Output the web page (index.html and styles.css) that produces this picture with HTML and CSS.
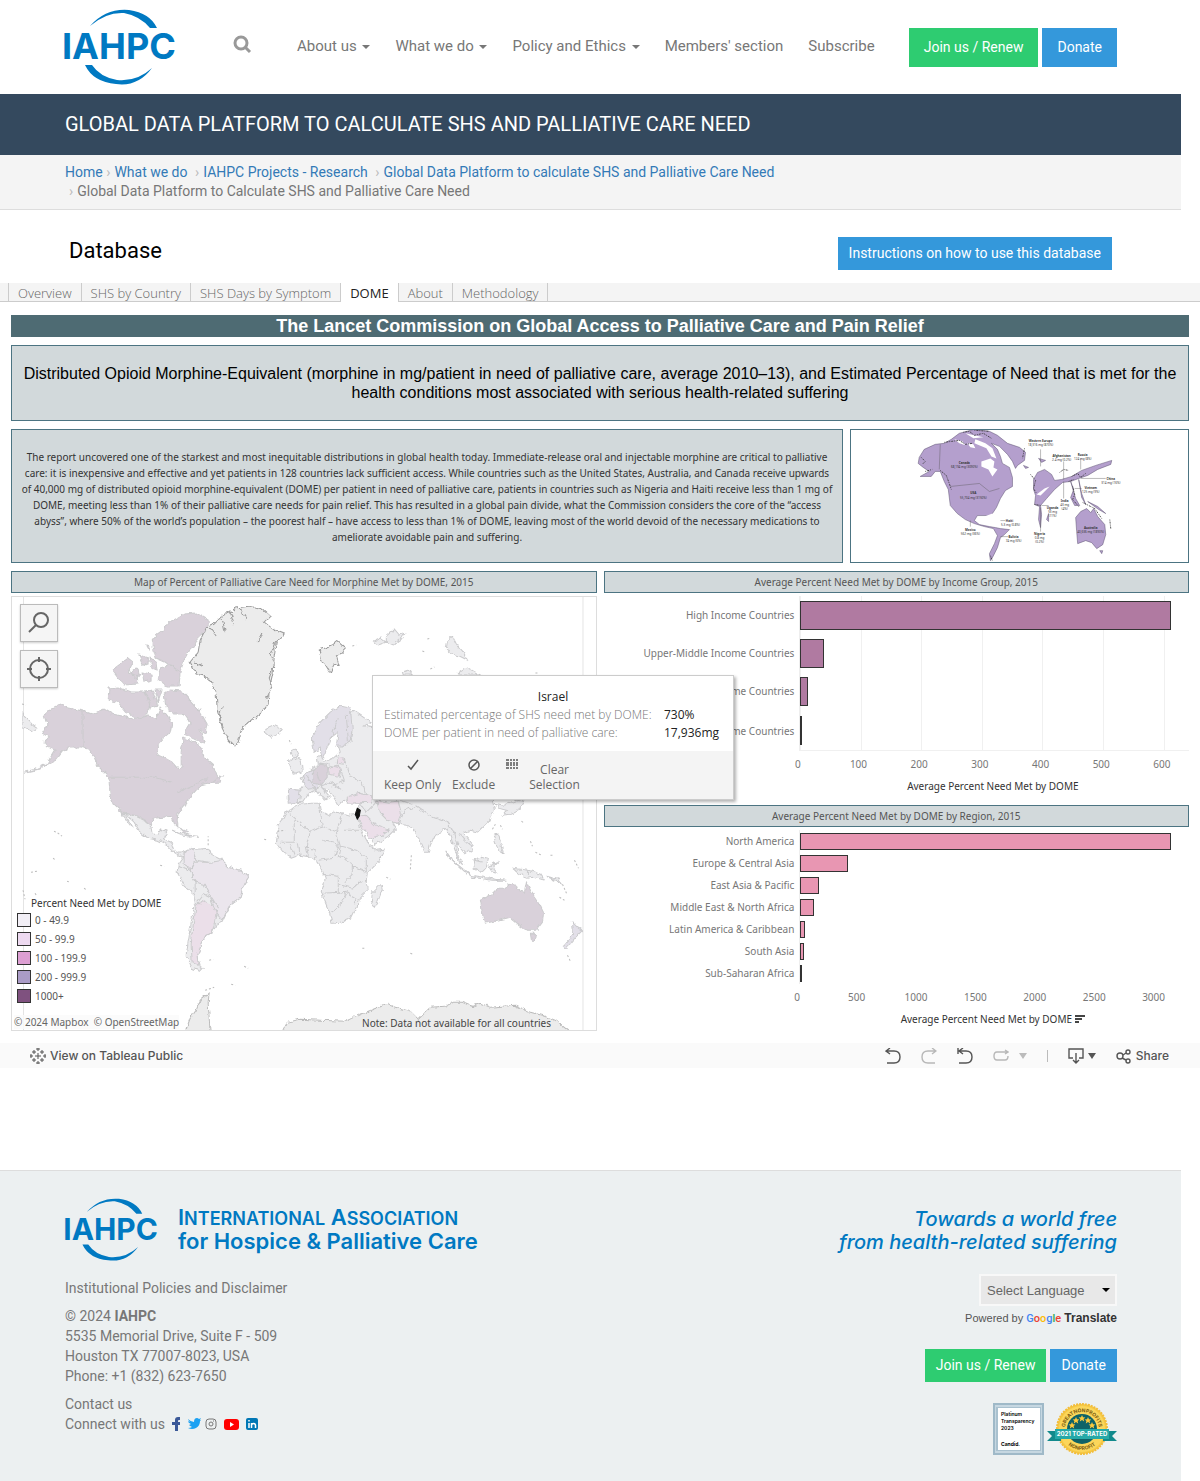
FILE: index.html
```html
<!DOCTYPE html>
<html lang="en">
<head>
    <meta charset="UTF-8">
    <meta name="viewport" content="width=device-width, initial-scale=1.0">
    <title>Global Data Platform - IAHPC</title>
    <link rel="stylesheet" href="styles.css">
</head>
<body>

    <header class="site header">
        <a href="#" class="logo" aria-label="IAHPC home">
            <svg class="logo-img" viewBox="0 0 112 76">
                <path d="M26 17Q42-1 65 1Q86 4 93 19L86 19Q76 7 60 4Q42 3 26 17Z"/>
                <path d="M21 56L28 56Q36 68 53 71Q73 73 88 59Q74 78 52 75Q29 73 21 56Z"/>
                <text x="-2" y="50">IAHPC</text>
            </svg>
        </a>
        <button class="search" aria-label="Search">
            <svg width="20" height="20" viewBox="0 0 20 20"><circle cx="8" cy="8" r="6"/><path d="M12 12L17 17"/></svg>
        </button>
        <nav class="nav">
            <a href="#">About us <i class="caret"></i></a>
            <a href="#">What we do <i class="caret"></i></a>
            <a href="#">Policy and Ethics <i class="caret"></i></a>
            <a href="#">Members' section</a>
            <a href="#">Subscribe</a>
        </nav>
        <div class="buttons">
            <a href="#" class="btn green">Join us / Renew</a>
            <a href="#" class="btn">Donate</a>
        </div>
    </header>

    <div class="site banner"><h1>GLOBAL DATA PLATFORM TO CALCULATE SHS AND PALLIATIVE CARE NEED</h1></div>

    <nav class="site breadcrumb" aria-label="Breadcrumb">
        <div>
            <a href="#">Home</a>
            <i>›</i><a href="#">What we do</a>
            <i class="wide">›</i><a href="#">IAHPC Projects - Research</a>
            <i class="wide">›</i><a href="#">Global Data Platform to calculate SHS and Palliative Care Need</a>
        </div>
        <div><i class="wide">›</i><span>Global Data Platform to Calculate SHS and Palliative Care Need</span></div>
    </nav>

    <main>
        <div class="site intro">
            <h2>Database</h2>
            <a href="#" class="btn small">Instructions on how to use this database</a>
        </div>

        <div class="tabs" role="tablist">
            <button role="tab">Overview</button>
            <button role="tab">SHS by Country</button>
            <button role="tab">SHS Days by Symptom</button>
            <button role="tab" class="active" aria-selected="true">DOME</button>
            <button role="tab">About</button>
            <button role="tab">Methodology</button>
        </div>

        <section class="dashboard">
            <h3 class="dash-title">The Lancet Commission on Global Access to Palliative Care and Pain Relief</h3>
            <p class="panel subtitle">Distributed Opioid Morphine-Equivalent (morphine in mg/patient in need of palliative care, average 2010–13), and Estimated Percentage of Need that is met for the health conditions most associated with serious health-related suffering</p>

            <div class="report-row">
                <p class="panel report">The report uncovered one of the starkest and most inequitable distributions in global health today. Immediate-release oral and injectable morphine are critical to palliative care: it is inexpensive and effective and yet patients in 128 countries lack sufficient access. While countries such as the United States, Australia, and Canada receive upwards of 40,000 mg of distributed opioid morphine-equivalent (DOME) per patient in need of palliative care, patients in countries such as Nigeria and Haiti receive less than 1 mg of DOME, meeting less than 1% of their palliative care needs for pain relief. This has resulted in a global pain divide, what the Commission considers the core of the “access abyss”, where 50% of the world’s population – the poorest half – have access to less than 1% of DOME, leaving most of the world devoid of the necessary medications to ameliorate avoidable pain and suffering.</p>
                <div class="cartogram">
                    <svg viewBox="852 431 336 131">
                        <g class="c-land">
                            <path d="M920 458L925 450L936 445L945 444L952 440L960 434L975 430L990 432L998 436L1008 444L1020 448L1026 453L1025 461L1018 466L1016 469L1013 462L1008 455L1000 447L992 444L998 450L1001 457L1003 464L1010 468L1013 478L1013 487L1006 491L1001 499L997 508L993 514L991 520L988 516L978 516L975 521L980 525L990 527L996 528L1001 529L1010 530L1005 535L1001 538L998 548L993 558L991 561L990 554L995 544L998 536L994 529L985 527L975 524L966 520L958 514L951 506L949 490L945 482L941 472L936 472L932 477L921 477L930 472L924 468L919 464Z"/>
                            <path d="M1034 480L1038 473L1045 470L1052 475L1055 481L1062 480L1072 477L1082 471L1096 466L1112 461L1111 465L1098 470L1088 476L1079 479L1071 482L1063 483L1055 490L1047 499L1041 506L1042 515L1041 528L1039 520L1040 507L1035 505L1036 496L1034 490Z"/>
                            <path d="M1076 518L1081 512L1087 509L1091 513L1094 509L1098 517L1105 525L1106 535L1103 545L1097 549L1092 543L1086 541L1078 544L1077 532Z"/>
                            <path d="M1100 551h3l-1 3zM1047 520l2-6v8zM1024 466l5 2-3 1zM1039 459l7 2-4 2z"/>
                            <path d="M1071 482L1074 490L1071 498L1075 506L1080 506L1076 499ZM1079 480L1082 494L1086 505L1082 498ZM1088 502L1098 507L1106 514L1099 510Z"/>
                        </g>
                        <g class="c-sea">
                            <path d="M976 440l10 4 7 5 4 10-5-2-5-8-12-5zM982 462l9-3 4 3-1 6 4 2-5 7-4-7-7-3zM966 434l18 4-10 1zM985 517l8-3 4 5-7 3zM1037 495l8-6 5-2-9 9zM955 440l8 2 3 4-6-2zM968 444l6 1 2 4-5-1z"/>
                        </g>
                        <g class="c-line">
                            <path d="M941 445L940 470M951 487L980 484L990 492L1000 489M1041 450V467M1064 462V480M1081 459V470M1081 479H1106M1075 489H1082M1064 482V499M1049 506H1042M1041 508V532M971 521V527M1001 521H1006M1001 537H1009"/>
                        </g>
                        <g class="c-edge">
                            <path d="M922 458l4 4-3 3M926 472l7-2M941 471l6 5 3 8 2 6M945 443l15-2 6 4 7-1M964 433l6-1 5 4 9-2 8 5M975 431l14 1M1025 449l-2 10M1060 473l4-3 5 1M1035 505l7 1M1072 477l6-3 3 4 5-4M1073 487l2 8-2 5 6 7M1083 503l12 6 7 10M1110 520l1 9M991 556l2 5M1031 475l5 6-2 8 3 5M1069 482l5-2"/>
                        </g>
                        <g class="c-text">
                            <text class="b" x="965" y="465">Canada</text><text x="965" y="469">68,194 mg (3090%)</text>
                            <text class="b" x="974" y="495">USA</text><text x="974" y="499">55,704 mg (3150%)</text>
                            <text class="b" x="1041" y="443">Western Europe</text><text x="1041" y="447">18,316 mg (870%)</text>
                            <text class="b" x="1062" y="458">Afghanistan</text><text x="1062" y="462">2.4 mg (0.2%)</text>
                            <text class="b" x="1083" y="457">Russia</text><text x="1083" y="461">124 mg (8%)</text>
                            <text class="b" x="1111" y="481">China</text><text x="1111" y="485">314 mg (16%)</text>
                            <text class="b" x="1091" y="490">Vietnam</text><text x="1091" y="494">125 mg (9%)</text>
                            <text class="b" x="1065" y="502">India</text><text x="1065" y="506">43 mg</text><text x="1065" y="510">(4%)</text>
                            <text class="b" x="1053" y="509">Uganda</text><text x="1053" y="513">53 mg</text><text x="1053" y="517">(11%)</text>
                            <text class="b" x="1010" y="522">Haiti</text><text x="1011" y="526">5.3 mg (0.8%)</text>
                            <text class="b" x="971" y="531">Mexico</text><text x="971" y="535">562 mg (36%)</text>
                            <text class="b" x="1014" y="538">Bolivia</text><text x="1014" y="542">74 mg (6%)</text>
                            <text class="b" x="1040" y="535">Nigeria</text><text x="1040" y="539">0.8 mg</text><text x="1040" y="543">(0.2%)</text>
                            <text class="b" x="1091" y="529">Australia</text><text x="1091" y="533">40,636 mg (1890%)</text>
                        </g>
                    </svg>
                </div>
            </div>

            <div class="charts-row">
                <div class="map-col">
                    <h4 class="panel heading">Map of Percent of Palliative Care Need for Morphine Met by DOME, 2015</h4>
                    <div class="map">
                        <svg class="world" viewBox="12 597 583 433">
                            <defs>
                                <filter id="coast" x="0" y="0" width="100%" height="100%">
                                    <feTurbulence type="fractalNoise" baseFrequency="0.2" numOctaves="2" seed="4"/>
                                    <feDisplacementMap in="SourceGraphic" scale="5" xChannelSelector="R" yChannelSelector="G"/>
                                </filter>
                            </defs>
                            <path class="edge" d="M23.5 597V1030M582.5 597V1030"/>
                            <g filter="url(#coast)">
                                <!-- North America -->
                                <g class="strong">
                                    <path d="M44 715L52 708L60 704L68 708L83 711L92 714L104 709L112 714L122 716L132 719L148 716L156 718L160 708L166 714L172 722L170 732L163 738L157 745L158 755L165 758L172 762L178 769L181 766L181 752L183 738L190 740L200 746L204 757L213 765L215 772L220 780L212 782L203 784L196 790L190 797L184 806L178 813L177 820L178 827L174 823L172 816L163 817L153 818L151 825L145 820L138 816L130 814L122 812L115 806L110 795L109 780L106 774L98 766L94 757L88 749L80 747L70 747L62 752L56 760L46 765L50 758L55 750L48 747L44 742L49 737L42 733L47 725Z"/>
                                    <path d="M153 640L157 634L163 630L170 622L184 614L196 613L208 620L208 629L199 636L195 645L188 652L184 660L180 672L176 670L165 662L156 658L153 648Z"/>
                                    <path d="M160 668L170 665L180 672L179 686L166 686L158 680ZM139 655L148 658L148 664L143 665ZM112 670L128 658L133 662L128 672L137 676L138 684L124 685L118 678ZM109 688L118 687L130 692L144 692L150 700L148 714L138 718L126 712L118 702L108 700ZM150 658L156 662L157 670L152 668ZM142 672L152 674L152 680L144 682ZM144 692L152 690L158 706L150 708ZM155 690L162 690L158 702ZM130 672l6-4 4 6-4 5zM147 646l3 1-1 3z"/>
                                    <path d="M164 694L170 690L182 691L190 700L199 710L207 724L205 733L200 730L204 742L196 740L184 734L190 724L183 714L174 714L166 708Z"/>
                                    <path d="M24 772L36 769L46 764L40 769ZM222 776l-3 6h-7zM180 828l8 4-3 1z"/>
                                </g>
                                <g class="grey">
                                    <path d="M222 616L236 608L250 606L262 609L270 616L264 622L274 630L284 634L276 642L274 656L273 672L269 690L268 704L262 712L252 720L242 728L238 742L235 747L228 740L222 728L217 710L216 694L211 682L204 676L196 674L190 662L198 652L200 640L206 628L214 624Z"/>
                                    <path d="M210 628l6 8M222 618l3 14M230 612l4 12M240 609l6 10M262 632l-4 10M275 642l-5 12 4 10-5 14 3 8-6 12M222 706l-3 10 4 12M194 662l8 4"/>
                                    <path d="M319 650L325 648L332 645L337 641L345 648L340 653L336 656L339 666L334 664L330 672L325 664L321 660Z"/>
                                </g>
                                <g class="land">
                                    <path d="M123 812L138 817L146 821L151 827L152 834L158 834L160 829L168 831L164 839L171 842L174 851L180 853L185 851L182 857L172 851L166 844L158 840L148 838L140 832L134 822ZM121 812l4 3 8 12-3-2zM171 830l12 3 8 3-8-1zM189 835l9 1-8 1z"/>
                                    <path d="M22 714l9 9 7 5-5 4-11-6zM266 728l7-3 9 4-3 5-8 3-6-5z"/>
                                    <!-- South America -->
                                    <path d="M184 854L190 847L197 849L208 848L212 855L222 860L228 866L240 870L249 877L243 886L240 898L230 905L222 922L216 924L212 932L205 936L201 945L197 955L200 966L203 968L200 971L192 968L186 955L189 935L194 905L195 895L184 885L177 872L178 865L183 858Z"/>
                                    <!-- Africa -->
                                    <path d="M291 810L299 804L312 803L319 803L320 810L330 815L336 811L350 815L357 814L358 820L362 832L369 845L376 850L384 849L378 862L367 873L366 882L367 890L359 898L358 906L353 912L350 918L340 922L332 923L329 912L323 897L321 890L325 878L322 870L318 862L311 857L300 855L292 858L283 852L276 843L278 832L277 825L283 818L287 810Z"/>
                                    <path d="M381 884L382 889L378 900L374 907L371 902L372 893Z"/>
                                    <!-- Europe and Asia -->
                                    <path d="M288 789L300 790L304 784L300 778L306 774L313 768L318 764L317 757L321 755L324 762L333 758L340 752L338 745L346 740L352 742L348 730L350 716L352 710L360 715L370 722L364 726L374 728L390 716L410 712L440 706L460 702L500 710L550 716L560 724L540 740L520 760L505 775L500 790L492 800L494 810L488 822L478 832L470 830L463 833L473 845L471 850L465 854L460 848L456 842L458 856L463 864L459 862L454 848L450 836L446 828L440 832L434 836L430 845L428 852L424 852L418 838L414 830L406 825L398 824L391 820L396 828L388 836L374 845L370 838L362 824L359 816L356 812L360 803L350 802L343 800L338 805L334 798L328 790L322 788L330 797L324 800L317 790L308 793L302 802L292 803L288 799Z"/>
                                    <path d="M288 762l7-6 6 4 1 12-9 2zM289 752l6-3 3 6-3 4z"/>
                                    <path d="M374 641l6-3 6 4-8 3zM386 636l8-7 5 6 6-2-4 6-8 6-7-3zM402 672l6-2 4 5h-9zM446 642l6-6 4 8 7 8 4 8-8-4-8-2-6-6zM458 672l8-5 14 8h-22z"/>
                                    <path d="M494 803l10 2 14-6 6 2-4 8-10 5-8 1 4-5-8-2zM445 850l7 10 18 15-6-3-14-13zM470 875l26 4 10 1h-14l-20-3zM473 860l8-4 7 2-2 9-5 6-7-4zM493 835l5-1 3 12 2 8-5-3zM488 866l10-5-6 6 5 6-5-1zM512 868l16 2 12 4 4 6-10-3-8 1-8-5zM546 876l12 3 3 4z"/>
                                </g>
                                <!-- shaded countries -->
                                <path class="brazil" d="M190 870L194 862L212 862L222 860L228 866L240 870L249 877L243 886L240 898L230 905L222 920L216 913L210 896L204 884L195 882ZM184 854L192 848L196 860L190 868L184 864Z"/>
                                <path class="pink" d="M196 906L203 900L213 905L216 912L214 924L212 932L205 936L201 945L197 955L198 964L192 962L191 945L193 925ZM327 768l10-3 4 4-2 7-11-2zM347 797l12-4 14 3-2 6-24 1zM357 816l8-1 10 10 14 5-7 5-13 3-7-11zM376 800l12 2 10-1 3 12-4 10-10-3-8-8zM337 757l7 1-1 6-7-1z"/>
                                <path class="lilac" d="M312 738L320 722L330 712L340 706L350 708L352 730L350 740L343 746L336 746L338 732L330 738L328 746L322 758L320 748L314 752ZM288 789l12 1-2 12-9 1zM302 776l10-6 6 6-1 12-10 1z"/>
                                <path class="strong" d="M312 772l8-8 6 1 1 12-6 8-8-2z"/>
                                <path class="strong" d="M480 900L492 894L498 888L504 888L508 884L516 885L520 891L524 892L526 882L531 892L538 902L543 912L542 922L536 930L526 930L518 924L510 917L498 920L484 923L482 912ZM530 934h5l-1 6h-3z"/>
                                <path class="lilac" d="M572 922l6 6 4 2-6 6-10 12-3-3 10-11z"/>
                                <!-- Antarctica -->
                                <path class="antarctica" d="M185 1032L190 1018L196 1010L200 1000L209 992L208 1003L210 1032ZM282 1032L287 1022L300 1019L320 1020L345 1021L360 1014L378 1007L387 1003L395 1007L410 1011L418 1019L430 1007L445 1006L453 1002L462 1002L472 1006L480 1003L490 1007L515 1005L530 1012L545 1016L555 1020L570 1032Z"/>
                                <!-- borders -->
                                <path class="borders" d="M83 711V748M109 777H155L172 782M178 792L200 782L208 778M196 904L204 894L212 898L218 908M178 865L190 870L195 882V900M196 860L208 862M288 812L310 832L322 826L336 832L343 812M343 830H360M294 820V842L280 842M320 810L322 826M310 832L306 846L316 850M336 832L340 846L356 850M322 840L338 844L334 858L318 860M340 846L338 856L352 862L352 874L344 882M356 850L366 858L366 872M352 866L366 872M322 874L338 876L338 892L323 893M338 884L352 888L362 880M346 892L338 908L332 912M346 892L356 898L354 904M338 893L346 892M298 842L300 855M306 846L308 856M290 844L294 855M316 850L314 858M316 772L322 788M326 764L340 768L344 780L332 786M344 758L350 776L362 782L366 796M306 776L316 790M338 718L328 746M346 714L348 740M312 790L330 782L342 790M360 803L366 812L376 802M398 824L404 810L416 806L430 816L446 822L450 828M400 800L412 804M446 822L454 832L458 846M458 832L466 842L472 846M482 862L474 860M528 870V880"/>
                            </g>
                            <path class="selected" d="M357 808l3 2-1 6-2 3-2-5z"/>
                            <g class="islets">
                                <path d="M54 831l4 2 4 3M53 858l3 2M31 872l6-1M67 881l3 1M35 893l2 3M23 890l2 9M84 888l3 2M209 960l4-1M244 966l4 2M231 984l4 1M160 865l4 1M205 990l9-3M277 831l8-1M264 839l3 1M411 855l-1 14M386 877l4 2M362 948h3M410 953l3 1M289 740l2 4M352 646l4-1M427 639l3-1M422 651l3 1M500 825l2 4M521 821l3 2M530 841l2 5M535 852l6 3M550 855h2M574 860l4 8M562 884l4 9M559 897l5 3M567 955l3 6M492 829l3-5M430 669l4-2M535 673h2M208 845v-9M22 704l4 1"/>
                            </g>
                        </svg>
                        <div class="map-tools">
                            <button aria-label="Search map"><svg width="24" height="24" viewBox="0 0 24 24"><circle cx="14" cy="9" r="7"/><path d="M9 14L2 21"/></svg></button>
                            <button aria-label="Reset map"><svg width="24" height="24" viewBox="0 0 24 24"><circle cx="12" cy="12" r="9"/><path d="M12 0V5M12 19V24M0 12H5M19 12H24"/></svg></button>
                        </div>
                        <div class="legend">
                            <strong>Percent Need Met by DOME</strong>
                            <ul>
                                <li><i class="k1"></i>0 - 49.9</li>
                                <li><i class="k2"></i>50 - 99.9</li>
                                <li><i class="k3"></i>100 - 199.9</li>
                                <li><i class="k4"></i>200 - 999.9</li>
                                <li><i class="k5"></i>1000+</li>
                            </ul>
                        </div>
                        <div class="credits">© 2024 Mapbox&nbsp; © OpenStreetMap</div>
                        <div class="note">Note: Data not available for all countries</div>
                    </div>
                </div>

                <div class="bars-col">
                    <h4 class="panel heading">Average Percent Need Met by DOME by Income Group, 2015</h4>
                    <div class="chart income">
                        <div class="rows">
                            <div class="row"><span>High Income Countries</span><div class="track"><b style="width: 95.4%"></b></div></div>
                            <div class="row"><span>Upper-Middle Income Countries</span><div class="track"><b style="width: 6%"></b></div></div>
                            <div class="row"><span>Lower-Middle Income Countries</span><div class="track"><b style="width: 2.1%"></b></div></div>
                            <div class="row"><span>Low Income Countries</span><div class="track"><b style="width: 0.3%"></b></div></div>
                        </div>
                        <div class="axis"><span>0</span><span>100</span><span>200</span><span>300</span><span>400</span><span>500</span><span>600</span></div>
                        <div class="axis-title">Average Percent Need Met by DOME</div>
                    </div>

                    <h4 class="panel heading">Average Percent Need Met by DOME by Region, 2015</h4>
                    <div class="chart region">
                        <div class="rows">
                            <div class="row"><span>North America</span><div class="track"><b style="width: 95.4%"></b></div></div>
                            <div class="row"><span>Europe &amp; Central Asia</span><div class="track"><b style="width: 12.2%"></b></div></div>
                            <div class="row"><span>East Asia &amp; Pacific</span><div class="track"><b style="width: 4.9%"></b></div></div>
                            <div class="row"><span>Middle East &amp; North Africa</span><div class="track"><b style="width: 3.4%"></b></div></div>
                            <div class="row"><span>Latin America &amp; Caribbean</span><div class="track"><b style="width: 1.3%"></b></div></div>
                            <div class="row"><span>South Asia</span><div class="track"><b style="width: 0.9%"></b></div></div>
                            <div class="row"><span>Sub-Saharan Africa</span><div class="track"><b style="width: 0.3%"></b></div></div>
                        </div>
                        <div class="axis"><span>0</span><span>500</span><span>1000</span><span>1500</span><span>2000</span><span>2500</span><span>3000</span></div>
                        <div class="axis-title">Average Percent Need Met by DOME <svg width="10" height="9" viewBox="0 0 10 9"><path d="M0 1H10M0 4H7M0 7H4"/></svg></div>
                    </div>
                </div>
            </div>

            <div class="tooltip">
                <div class="tip-body">
                    <div class="tip-name">Israel</div>
                    <dl>
                        <dt>Estimated percentage of SHS need met by DOME:</dt><dd>730%</dd>
                        <dt>DOME per patient in need of palliative care:</dt><dd>17,936mg</dd>
                    </dl>
                </div>
                <div class="tip-actions">
                    <button><svg width="12" height="12" viewBox="0 0 12 12"><path d="M1 7L4 10L11 1"/></svg>Keep Only</button>
                    <button><svg width="12" height="12" viewBox="0 0 12 12"><circle cx="6" cy="6" r="5"/><path d="M2 10L10 2"/></svg>Exclude</button>
                    <button class="data" aria-label="View data"><svg width="12" height="12" viewBox="0 0 12 12"><path d="M0 2H3M4 2H6M7 2H9M10 2H12M0 5H3M4 5H6M7 5H9M10 5H12M0 7H3M4 7H6M7 7H9M10 7H12M0 10H3M4 10H6M7 10H9M10 10H12"/></svg></button>
                    <button>Clear<br>Selection</button>
                </div>
            </div>
        </section>

        <div class="toolbar">
            <a href="#" class="view">
                <svg width="16" height="16" viewBox="0 0 16 16"><path d="M8 5V11M5 8H11M8 0V3M6 1H10M8 13V16M6 15H10M0 8H3M1 6V10M13 8H16M15 6V10M4 2V6M2 4H6M12 2V6M10 4H14M4 10V14M2 12H6M12 10V14M10 12H14"/></svg>
                View on Tableau Public
            </a>
            <div class="tools">
                <button aria-label="Undo"><svg width="16" height="16" viewBox="0 0 16 16"><path d="M5 0L1 3L5 6M1 3H9Q15 3 15 9T9 15H2"/></svg></button>
                <button aria-label="Redo" disabled><svg width="16" height="16" viewBox="0 0 16 16"><path d="M11 0L15 3L11 6M15 3H7Q1 3 1 9T7 15H14"/></svg></button>
                <button aria-label="Replay"><svg width="16" height="16" viewBox="0 0 16 16"><path d="M1 0V6M6 0L2 3L6 6M2 3H9Q15 3 15 9T9 15H2"/></svg></button>
                <button aria-label="Refresh" disabled><svg width="16" height="16" viewBox="0 0 16 16"><path d="M12 2L15 4L12 6M15 4H4Q1 4 1 8T4 12H12Q15 12 15 8"/></svg></button>
                <i class="down pale"></i>
                <i class="sep"></i>
                <button class="download" aria-label="Download"><svg width="16" height="16" viewBox="0 0 16 16"><path d="M5 10H1V1H15V10H11M8 5V15M5 12L8 15L11 12"/></svg><i class="down"></i></button>
                <button class="share"><svg width="16" height="16" viewBox="0 0 16 16"><circle cx="4" cy="8" r="3"/><circle cx="12" cy="4" r="2"/><circle cx="12" cy="13" r="2"/><path d="M7 7L10 5M6 10L10 12"/></svg>Share</button>
            </div>
        </div>
    </main>

    <footer class="site footer">
        <div class="about">
            <div class="brand">
                <svg class="logo-img" viewBox="0 0 112 76">
                    <path d="M26 17Q42-1 65 1Q86 4 93 19L86 19Q76 7 60 4Q42 3 26 17Z"/>
                    <path d="M21 56L28 56Q36 68 53 71Q73 73 88 59Q74 78 52 75Q29 73 21 56Z"/>
                    <text x="-2" y="50">IAHPC</text>
                </svg>
                <div class="brand-name"><span class="caps">International</span> <span class="caps">Association</span><br>for Hospice &amp; Palliative Care</div>
            </div>
            <p><a href="#">Institutional Policies and Disclaimer</a></p>
            <p>© 2024 <b>IAHPC</b><br>5535 Memorial Drive, Suite F - 509<br>Houston TX 77007-8023, USA<br>Phone: +1 (832) 623-7650</p>
            <p><a href="#">Contact us</a></p>
            <p class="social">Connect with us
                <a href="#" aria-label="Facebook"><svg width="9" height="14" viewBox="0 0 9 14"><path fill="#3b5998" d="M3 14V8H0V5H3V3Q3 0 6 0H8V3H7Q6 3 6 4V5H8L8 8H6V14Z"/></svg></a>
                <a href="#" aria-label="Twitter" class="tw"><svg width="13" height="12" viewBox="0 0 13 12"><path fill="#1da1f2" d="M0 1Q3 4 6 4Q6 0 9 0Q10 0 11 1L13 0L12 2L13 2L12 3Q12 8 8 10Q4 12 0 10Q2 10 4 9Q2 8 1 7L3 6Q0 5 0 3L2 4Q0 2 0 1Z"/></svg></a>
                <a href="#" aria-label="Instagram"><svg width="12" height="12" viewBox="0 0 12 12" fill="none" stroke="#777"><rect x="1" y="1" width="10" height="10" rx="3"/><circle cx="6" cy="6" r="2"/><path d="M8 3h1"/></svg></a>
                <a href="#" aria-label="YouTube"><svg width="15" height="11" viewBox="0 0 15 11"><rect width="15" height="11" rx="3" fill="#f00"/><path fill="#fff" d="M6 3L10 5.5L6 8Z"/></svg></a>
                <a href="#" aria-label="LinkedIn"><svg width="12" height="12" viewBox="0 0 12 12"><rect width="12" height="12" rx="2" fill="#0077b5"/><path fill="none" stroke="#fff" stroke-width="1.5" d="M3 5V10M3 2V3.5M5.500 10V5M5.500 7Q6 5.500 7.500 5.500T9.500 7V10"/></svg></a>
            </p>
        </div>
        <div class="side">
            <p class="slogan">Towards a world free<br>from health-related suffering</p>
            <div class="select"><select aria-label="Language"><option>Select Language</option></select></div>
            <p class="powered">Powered by <span class="google"><i>G</i><i>o</i><i>o</i><i>g</i><i>l</i><i>e</i></span> <b>Translate</b></p>
            <div class="buttons">
                <a href="#" class="btn small green">Join us / Renew</a>
                <a href="#" class="btn small">Donate</a>
            </div>
            <div class="badges">
                <svg width="51" height="52" viewBox="0 0 51 52">
                    <rect width="51" height="52" fill="#9fb9c8"/><rect x="2" y="2" width="47" height="48" fill="#c6d7e1"/><rect x="3" y="4" width="45" height="44" fill="#a9c1cf"/><rect x="5" y="5" width="42" height="42" fill="#fff"/>
                    <g class="candid"><text x="8" y="13">Platinum</text><text x="8" y="20">Transparency</text><text x="8" y="27">2023</text><text class="b" x="8" y="43">Candid.</text></g>
                </svg>
                <svg width="70" height="52" viewBox="0 0 70 52">
                    <circle cx="35" cy="26" r="25" fill="#f6c945" stroke="#f2bd3a" stroke-width="2" stroke-dasharray="2 1"/>
                    <circle cx="35" cy="26" r="23" fill="#fbd65b"/>
                    <circle cx="35" cy="26" r="15" fill="#0e6268"/>
                    <path id="ringTop" fill="none" d="M18 26A17 17 0 0 1 52 26"/>
                    <path id="ringBottom" fill="none" d="M14 26A21 21 0 0 0 56 26"/>
                    <g class="ring"><text><textPath href="#ringTop" startOffset="50%">GREATNONPROFITS</textPath></text><text><textPath href="#ringBottom" startOffset="50%">NONPROFIT</textPath></text></g>
                    <path id="star" fill="#fbc93d" d="M35 12L36 14.200L38.400 14.400L36.600 16L37.200 18.400L35 17L32.800 18.400L33.400 16L31.600 14.400L34 14.200Z"/>
                    <use href="#star" x="-6" y="2"/>
                    <use href="#star" x="6" y="2"/>
                    <use href="#star" x="-10" y="7"/>
                    <use href="#star" x="10" y="7"/>
                    <path fill="#128a8c" d="M0 28H14V38H0L5 33ZM70 28H56V38H70L65 33Z"/>
                    <path fill="#25a9a8" d="M8 26H62V36H8Z"/>
                    <text class="rated" x="35" y="33">2021 TOP-RATED</text>
                </svg>
            </div>
        </div>
    </footer>

</body>
</html>
```
FILE: styles.css
```css
* {
    box-sizing: border-box;
}
body {
    margin: 0;
    background-color: #fff;
    color: #777;
    font-family: Roboto, Arial, sans-serif;
    font-size: 14px;
    line-height: 20px;
}
h1, h2, h3, h4, p, ul, dl, dd {
    margin: 0;
    padding: 0;
    font-weight: normal;
}
a {
    color: inherit;
    text-decoration: none;
}
button {
    padding: 0;
    border: 0;
    background: none;
    color: inherit;
    font: inherit;
    cursor: pointer;
}
svg {
    display: block;
}

/* site header */
.site {
    margin-right: 19px;
    padding-left: 65px;
    padding-right: 64px;
}
.header {
    display: flex;
    align-items: center;
    height: 94px;
    padding-left: 64px;
}
.logo-img {
    width: 112px;
    fill: #0079c2;
    overflow: visible;
}
.logo-img text {
    font: bold 36px Inter, sans-serif;
}
.search {
    margin-left: 57px;
    margin-bottom: 4px;
}
.search svg {
    fill: none;
    stroke: #999;
    stroke-width: 3;
}
.nav {
    display: flex;
    flex: 1;
    gap: 25px;
    margin-left: 44px;
    margin-bottom: 2px;
    font-size: 15px;
    white-space: nowrap;
}
.caret {
    display: inline-block;
    margin-left: 2px;
    border: 4px solid transparent;
    border-top-color: #777;
    border-bottom: 0;
    vertical-align: middle;
}
.buttons {
    display: flex;
    gap: 4px;
}
.btn {
    padding: 10px 15px;
    background-color: #3498db;
    color: #fff;
    line-height: 19px;
    white-space: nowrap;
}
.btn.small {
    padding: 7px 11px;
}
.btn.green {
    background-color: #2ecc71;
}
.banner {
    padding-top: 20px;
    padding-bottom: 20px;
    background-color: #34495e;
    color: #fff;
}
.banner h1 {
    font-size: 20px;
    line-height: 21px;
}
.breadcrumb {
    padding-top: 8px;
    padding-bottom: 8px;
    background-color: #f4f4f4;
    border-bottom: 1px solid #ddd;
    line-height: 19px;
}
.breadcrumb a {
    color: #337ab7;
}
.breadcrumb i {
    padding-right: 4px;
    color: #bbb;
    font-style: normal;
}
.breadcrumb i.wide {
    padding-left: 4px;
}
.intro {
    display: flex;
    align-items: flex-start;
    justify-content: space-between;
    padding: 27px 69px 13px 69px;
}
.intro h2 {
    color: #000;
    font-size: 22px;
    line-height: 28px;
}

/* tableau */
.tabs {
    display: flex;
    height: 19px;
    padding-left: 8px;
    background-color: #f4f4f4;
    border-bottom: 1px solid #ccc;
}
.tabs button {
    padding: 2px 9px 0;
    border-right: 1px solid #ccc;
    color: #666;
    font: 300 13px/17px "Open Sans", sans-serif;
}
.tabs button:first-child {
    border-left: 1px solid #ccc;
}
.tabs .active {
    height: 19px;
    background-color: #fff;
    color: #222;
    font-weight: 400;
}
.dashboard {
    position: relative;
    display: flex;
    flex-direction: column;
    gap: 8px;
    padding: 13px 11px 12px;
    font-family: "Noto Sans", sans-serif;
    font-size: 10px;
}
.panel {
    background-color: #d2d9db;
    border: 1px solid #4c7482;
    text-align: center;
}
.dash-title {
    background-color: #4e6b73;
    color: #fff;
    font: bold 18px/22px "Liberation Sans", Arial, sans-serif;
    text-align: center;
}
.subtitle {
    padding: 18px 8px;
    color: #000;
    font: 16px/19px "Liberation Sans", Arial, sans-serif;
}
.report-row {
    display: grid;
    grid-template-columns: 832fr 339fr;
    gap: 7px;
}
.report {
    padding: 19px 8px 17px;
    color: #333;
    font-size: 10px;
    line-height: 16px;
}
.cartogram {
    display: flex;
    justify-content: center;
    border: 1px solid #4c7482;
}
.cartogram svg {
    width: 100%;
    max-height: 132px;
}
.c-land {
    fill: #b49fcd;
    stroke: #5d5270;
    stroke-width: 0.5;
}
.c-sea {
    fill: #fff;
}
.c-line {
    stroke: #555;
    stroke-width: 0.4;
    fill: none;
}
.c-edge {
    stroke: #333;
    stroke-width: 0.8;
    stroke-dasharray: 1 1 2 1;
    fill: none;
}
.c-text {
    fill: #333;
    font-size: 3px;
    text-anchor: middle;
}
.b {
    font-weight: bold;
}
.charts-row {
    display: grid;
    grid-template-columns: 1fr 1fr;
    gap: 7px;
}
.map-col, .bars-col {
    display: flex;
    flex-direction: column;
    min-width: 0;
}
.heading {
    color: #555;
    font-size: 10px;
    line-height: 20px;
}
.map {
    position: relative;
    flex: 1;
    margin-top: 3px;
    border: 1px solid #ddd;
}
.world {
    width: 100%;
    height: 100%;
}
.world .edge {
    stroke: #e4e4e4;
}
.land, .lilac, .brazil, .pink, .strong {
    fill: #ececee;
    stroke: #cbcbcd;
    stroke-width: 1;
}
.lilac {
    fill: #e2dfe8;
}
.brazil {
    fill: #ebe6ed;
}
.pink {
    fill: #ebdfe9;
}
.strong {
    fill: #d9d1da;
}
.grey, .antarctica {
    fill: #ececec;
    stroke: #999;
    stroke-width: 1;
}
.antarctica {
    stroke: #bbb;
}
.borders {
    fill: none;
    stroke: #cbcbcd;
}
.selected {
    fill: #111;
    stroke: #111;
}
.islets {
    fill: none;
    stroke: #bbb;
    stroke-dasharray: 2 2;
}
.map-tools {
    position: absolute;
    top: 7px;
    left: 8px;
    display: grid;
    gap: 8px;
}
.map-tools button {
    display: grid;
    place-items: center;
    width: 38px;
    height: 38px;
    background-color: #f5f5f5;
    border: 1px solid #bbb;
    box-shadow: 0 1px 2px rgba(0, 0, 0, 0.2);
}
.map-tools svg {
    fill: none;
    stroke: #666;
    stroke-width: 2;
}
.legend {
    position: absolute;
    bottom: 25px;
    left: 5px;
    color: #555;
    font-size: 10px;
}
.legend strong {
    display: block;
    padding-left: 14px;
    color: #333;
    font-weight: 400;
    line-height: 14px;
}
.legend ul {
    list-style: none;
}
.legend li {
    display: flex;
    align-items: center;
    gap: 4px;
    height: 19px;
}
.legend i {
    width: 14px;
    height: 14px;
    border: 1px solid #333;
}
.k1 { background-color: #f2eff6; }
.k2 { background-color: #edd9f0; }
.k3 { background-color: #dd9fd3; }
.k4 { background-color: #aa9bc6; }
.k5 { background-color: #7f517f; }
.credits, .note {
    position: absolute;
    bottom: 1px;
    left: 2px;
    background-color: rgba(250, 250, 250, 0.8);
    color: #666;
    font-size: 10px;
    line-height: 14px;
}
.note {
    bottom: 0;
    left: 60%;
    background: none;
    color: #444;
    white-space: nowrap;
}

/* bar charts */
.chart {
    padding-top: 3px;
    color: #777;
}
.row {
    display: grid;
    grid-template-columns: 196fr 390fr;
    align-items: center;
    height: 38px;
}
.row span {
    padding-right: 5px;
    text-align: right;
    white-space: nowrap;
}
.track {
    display: flex;
    align-items: center;
    height: 100%;
    border-left: 1px solid #eee;
}
.track b {
    height: 29px;
    background-color: #b07aa1;
    border: 1px solid #333;
}
.income .track {
    background: repeating-linear-gradient(to right, #f0f0f0 0 1px, transparent 1px 15.58%);
}
.income .row:last-child {
    height: 41px;
}
.income .row:last-child .track {
    border-bottom: 1px solid #f0f0f0;
}
.region .row {
    height: 22px;
}
.region .track b {
    height: 17px;
    background-color: #e896b2;
}
.axis {
    display: flex;
    width: 73%;
    margin-left: 28%;
    padding-top: 5px;
    line-height: 16px;
}
.axis span {
    width: 14.2%;
    flex: none;
    text-align: center;
}
.region .axis span {
    width: 13.9%;
}
.axis-title {
    display: flex;
    justify-content: center;
    align-items: center;
    gap: 3px;
    margin: 6px 0 11px 33%;
    color: #333;
    line-height: 16px;
}
.region .axis-title {
    margin-bottom: 4px;
}
.axis-title svg {
    stroke: #444;
    stroke-width: 2;
}

/* tooltip */
.tooltip {
    position: absolute;
    top: 373px;
    left: 372px;
    width: 362px;
    background-color: #fff;
    border: 1px solid #ccc;
    box-shadow: 2px 2px 3px rgba(0, 0, 0, 0.3);
    font-family: "Open Sans", sans-serif;
    font-size: 12px;
}
.tip-body {
    padding: 12px 11px 9px;
    line-height: 18px;
}
.tip-name {
    color: #222;
    text-align: center;
}
.tip-body dl {
    display: grid;
    grid-template-columns: 280px auto;
    font-weight: 300;
    white-space: nowrap;
}
.tip-body dd {
    color: #222;
    font-weight: 400;
}
.tip-actions {
    display: flex;
    align-items: flex-end;
    gap: 11px;
    height: 48px;
    padding: 0 11px 7px;
    background-color: #f4f4f4;
    color: #666;
    line-height: 15px;
}
.tip-actions svg {
    margin: 0 auto 6px;
    fill: none;
    stroke: #555;
    stroke-width: 1.5;
}
.tip-actions .data {
    align-self: flex-start;
    margin-top: 7px;
}

.toolbar {
    display: flex;
    align-items: center;
    justify-content: space-between;
    height: 25px;
    padding: 0 31px 0 30px;
    background-color: #fafafa;
    color: #555;
    font: 500 12px Inter, sans-serif;
}
.toolbar svg {
    fill: none;
    stroke: #555;
    stroke-width: 1.4;
}
.view, .tools, .download, .share {
    display: flex;
    align-items: center;
    gap: 4px;
}
.view svg {
    stroke-width: 1;
}
.tools {
    gap: 20px;
}
.tools button:disabled {
    opacity: 0.4;
}
.down {
    border: 4px solid transparent;
    border-top: 6px solid #555;
    border-bottom: 0;
}
.pale {
    margin-left: -10px;
    border-top-color: #bbb;
}
.sep {
    width: 1px;
    height: 12px;
    background-color: #bbb;
}

/* footer */
.footer {
    display: flex;
    justify-content: space-between;
    min-height: 311px;
    margin-top: 102px;
    padding-top: 27px;
    background-color: #ecf0f1;
    border-top: 1px solid #ddd;
}
.about p {
    margin-bottom: 8px;
}
.about p:nth-last-child(2) {
    margin-bottom: 0;
}
.brand {
    display: flex;
    align-items: center;
    gap: 20px;
    margin-bottom: 17px;
}
.brand .logo-img {
    width: 93px;
}
.brand-name {
    color: #0079c2;
    font: 600 22px/23px Inter, sans-serif;
    white-space: nowrap;
}
.caps {
    display: inline-block;
    font-size: 18px;
    text-transform: uppercase;
}
.caps::first-letter {
    font-size: 22px;
}
.social {
    display: flex;
    align-items: center;
}
.social a {
    margin-left: 7px;
}
.social .tw {
    margin-right: -3px;
}
.side {
    display: flex;
    flex-direction: column;
    align-items: flex-end;
}
.slogan {
    margin: 10px 0 20px;
    color: #0079c2;
    font: italic 500 20px/23px Inter, sans-serif;
    text-align: right;
}
.select {
    position: relative;
}
.select::after {
    content: "";
    position: absolute;
    top: 14px;
    right: 7px;
    border: 4px solid transparent;
    border-top-color: #000;
    border-bottom: 0;
    pointer-events: none;
}
.side select {
    display: block;
    width: 138px;
    height: 32px;
    padding: 0 6px;
    appearance: none;
    background-color: #e8e8e8;
    border: 2px solid #f8f8f8;
    border-radius: 0;
    color: #666;
    font: 13px "Liberation Sans", Arial, sans-serif;
}
.powered {
    margin: 1px 0 20px;
    color: #555;
    font: 11px/22px "Liberation Sans", Arial, sans-serif;
}
.powered b {
    color: #333;
    font-size: 12px;
}
.google i {
    color: #4285f4;
    font: 500 11px Roboto, sans-serif;
}
.google i:nth-child(2), .google i:nth-child(6) {
    color: #ea4335;
}
.google i:nth-child(3) {
    color: #fbbc05;
}
.google i:nth-child(5) {
    color: #34a853;
}
.badges {
    display: flex;
    gap: 3px;
    margin-top: 21px;
}
.candid {
    font: 600 5px Inter, sans-serif;
}
.ring text {
    fill: #7a5a10;
    font: bold 5px Inter, sans-serif;
    text-anchor: middle;
}
.rated {
    fill: #fff;
    font: bold 6px Inter, sans-serif;
    text-anchor: middle;
}
```
